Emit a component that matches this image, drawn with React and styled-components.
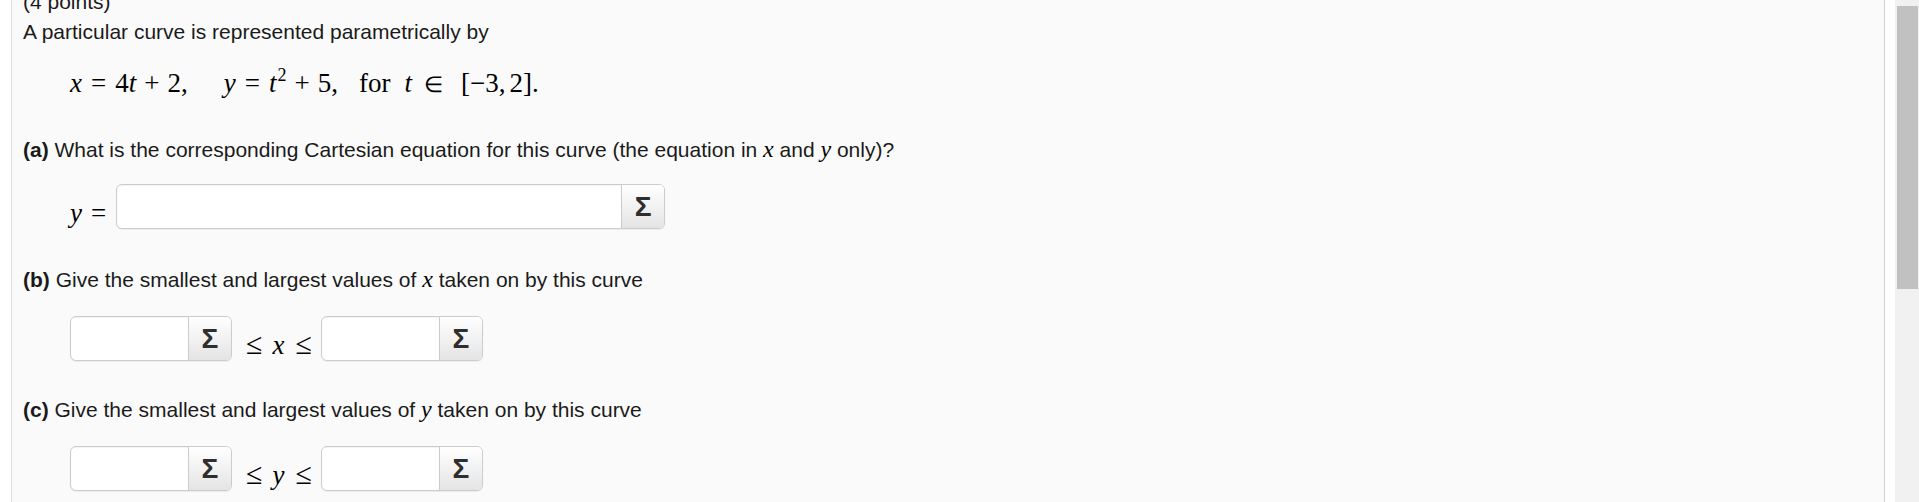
import React from "react";
import styled, { createGlobalStyle } from "styled-components";

const Global = createGlobalStyle`
  html, body {
    margin: 0;
    padding: 0;
    background: #fff;
    overflow: hidden;
  }
  body {
    font-family: "Liberation Sans", Arial, sans-serif;
  }
`;

const Pagina = styled.div`
  display: flex;
  height: 502px;
  padding-left: 11px;
  box-sizing: border-box;
`;

const Panel = styled.div`
  flex: 1;
  margin-right: 10px;
  background: #fafafa;
  border-left: 1px solid #dddddd;
  border-right: 1px solid #d2d2d2;
  padding-left: 11px;
  overflow: hidden;
`;

const Contenido = styled.div`
  margin-top: -13px;
  color: #1a1a1a;
  font-size: 21px;
  line-height: 30px;
`;

const Linea = styled.div`
  white-space: nowrap;
`;

const Negrita = styled.b`
  font-weight: bold;
`;

// matematica dentro de una linea de texto
const Mate = styled.span`
  font-family: "Liberation Serif", "Times New Roman", serif;
  font-size: 24px;
  line-height: 18px;
  color: #000;
  white-space: nowrap;
`;

const Var = styled.i`
  font-style: italic;
`;

const Rel = styled.span`
  margin: 0 ${(p) => p.$der ?? 9}px 0 ${(p) => p.$izq ?? 9}px;
  font-size: ${(p) => p.$tam || 27}px;
`;

const Bin = styled.span`
  margin: 0 8px;
`;

const Sup = styled.sup`
  font-size: 18px;
  vertical-align: 11px;
  line-height: 0;
  margin-left: 1px;
`;

const Hueco = styled.span`
  display: inline-block;
  width: ${(p) => p.$w}px;
`;

const Ecuacion = styled.div`
  margin: 21px 0 35px 47px;
  font-family: "Liberation Serif", "Times New Roman", serif;
  font-size: 27px;
  line-height: 30px;
  color: #000;
  white-space: nowrap;
`;

const FilaRespuesta = styled.div`
  display: flex;
  align-items: flex-end;
  margin: ${(p) => p.$arriba ?? 21}px 0 ${(p) => p.$abajo ?? 34}px 47px;
`;

const Etiqueta = styled.span`
  font-family: "Liberation Serif", "Times New Roman", serif;
  font-size: 27px;
  line-height: 30px;
  color: #000;
  margin: 0 ${(p) => p.$der ?? 10}px 1px ${(p) => p.$izq ?? 0}px;
  white-space: nowrap;
`;

const Campo = styled.div`
  display: flex;
  height: 45px;
  box-sizing: border-box;
  border: 1px solid #cccccc;
  border-radius: 6px;
  background: #fff;
  overflow: hidden;
  box-shadow: 0 1px 1px rgba(0, 0, 0, 0.06);
`;

const Entrada = styled.input`
  width: ${(p) => p.$ancho}px;
  border: none;
  outline: none;
  background: transparent;
  padding: 0 9px;
  box-sizing: border-box;
  font: 21px "Liberation Sans", Arial, sans-serif;
  box-shadow: inset 0 1px 1px rgba(0, 0, 0, 0.05);
`;

const BotonSigma = styled.button`
  width: 43px;
  padding: 0;
  border: none;
  border-left: 1px solid #cccccc;
  background: linear-gradient(#ffffff, #e4e4e4);
  box-sizing: border-box;
  display: flex;
  align-items: center;
  justify-content: center;
  font: bold 28px "Liberation Sans", Arial, sans-serif;
  color: #2e2e2e;
  cursor: pointer;
`;

const BarraScroll = styled.div`
  width: 24px;
  background: #f1f1f1;
  padding: 6px 1px 0 2px;
  box-sizing: border-box;
`;

const Pulgar = styled.div`
  height: 283px;
  background: #c1c1c1;
`;

const CampoSigma = ({ ancho }) => (
  <Campo>
    <Entrada type="text" $ancho={ancho} />
    <BotonSigma type="button">Σ</BotonSigma>
  </Campo>
);

const Desigualdad = ({ letra }) => (
  <Etiqueta $izq={14} $der={9}>
    <Rel $izq={0} $der={10} $tam={30}>≤</Rel>
    <Var>{letra}</Var>
    <Rel $izq={11} $der={0} $tam={30}>≤</Rel>
  </Etiqueta>
);

const App = () => {
  return (
    <>
      <Global />
      <Pagina>
        <Panel>
          <Contenido>
            <Linea>(4 points)</Linea>
            <Linea>A particular curve is represented parametrically by</Linea>

            <Ecuacion>
              <Var>x</Var>
              <Rel>=</Rel>4<Var>t</Var>
              <Bin>+</Bin>2,
              <Hueco $w={36} />
              <Var>y</Var>
              <Rel>=</Rel>
              <Var>t</Var>
              <Sup>2</Sup>
              <Bin>+</Bin>5,
              <Hueco $w={21} />
              for
              <Hueco $w={14} />
              <Var>t</Var>
              <Rel $tam={22} $izq={12} $der={18}>∈</Rel>[−3,<Hueco $w={4} />2].
            </Ecuacion>

            <Linea>
              <Negrita>(a)</Negrita> What is the corresponding Cartesian equation for this curve (the
              equation in <Mate><Var>x</Var></Mate> and <Mate><Var>y</Var></Mate> only)?
            </Linea>
            <FilaRespuesta $arriba={19} $abajo={36}>
              <Etiqueta>
                <Var>y</Var>
                <Rel $der={0}>=</Rel>
              </Etiqueta>
              <CampoSigma ancho={504} />
            </FilaRespuesta>

            <Linea>
              <Negrita>(b)</Negrita> Give the smallest and largest values of{" "}
              <Mate><Var>x</Var></Mate> taken on by this curve
            </Linea>
            <FilaRespuesta>
              <CampoSigma ancho={117} />
              <Desigualdad letra="x" />
              <CampoSigma ancho={117} />
            </FilaRespuesta>

            <Linea>
              <Negrita>(c)</Negrita> Give the smallest and largest values of{" "}
              <Mate><Var>y</Var></Mate> taken on by this curve
            </Linea>
            <FilaRespuesta>
              <CampoSigma ancho={117} />
              <Desigualdad letra="y" />
              <CampoSigma ancho={117} />
            </FilaRespuesta>
          </Contenido>
        </Panel>
        <BarraScroll>
          <Pulgar />
        </BarraScroll>
      </Pagina>
    </>
  );
};

export default App;
